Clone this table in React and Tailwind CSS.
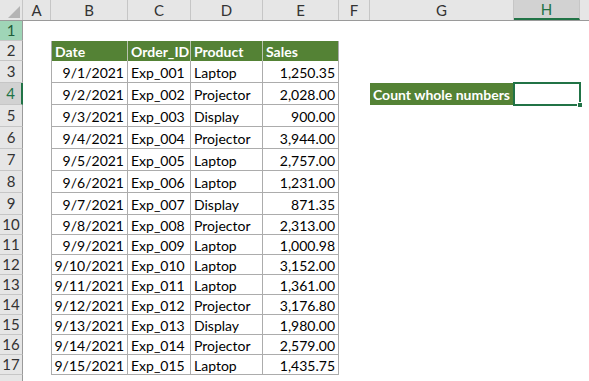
import React from 'react'

// column widths (px), A..H then the partial column at the right edge
const COLS = [
  { key: 'A', w: 'w-[28px]' },
  { key: 'B', w: 'w-[77px]' },
  { key: 'C', w: 'w-[63px]' },
  { key: 'D', w: 'w-[72px]' },
  { key: 'E', w: 'w-[76px]' },
  { key: 'F', w: 'w-[31px]' },
  { key: 'G', w: 'w-[144px]' },
  { key: 'H', w: 'w-[66px]' },
]

const DATA = [
  ['9/1/2021', 'Exp_001', 'Laptop', '1,250.35'],
  ['9/2/2021', 'Exp_002', 'Projector', '2,028.00'],
  ['9/3/2021', 'Exp_003', 'Display', '900.00'],
  ['9/4/2021', 'Exp_004', 'Projector', '3,944.00'],
  ['9/5/2021', 'Exp_005', 'Laptop', '2,757.00'],
  ['9/6/2021', 'Exp_006', 'Laptop', '1,231.00'],
  ['9/7/2021', 'Exp_007', 'Display', '871.35'],
  ['9/8/2021', 'Exp_008', 'Projector', '2,313.00'],
  ['9/9/2021', 'Exp_009', 'Laptop', '1,000.98'],
  ['9/10/2021', 'Exp_010', 'Laptop', '3,152.00'],
  ['9/11/2021', 'Exp_011', 'Laptop', '1,361.00'],
  ['9/12/2021', 'Exp_012', 'Projector', '3,176.80'],
  ['9/13/2021', 'Exp_013', 'Display', '1,980.00'],
  ['9/14/2021', 'Exp_014', 'Projector', '2,579.00'],
  ['9/15/2021', 'Exp_015', 'Laptop', '1,435.75'],
]

const font = { fontFamily: 'Lato, "Open Sans", sans-serif' }

// ─── Row header cell ─────────────────────────────────────────────────────────
function RowHead({ n, selected, tinted }) {
  const bg = selected
    ? 'bg-[#d2d2d2] text-[#217346] border-r-2 border-r-[#217346]'
    : tinted
    ? 'bg-[#9fd5b7] text-[#1e5c3a] border-r border-r-[#9a9a9a]'
    : 'bg-[#e6e6e6] text-[#333] border-r border-r-[#9a9a9a]'
  return (
    <div className={`w-[23px] shrink-0 h-full flex items-center justify-center text-[15px] border-b border-b-[#c6c6c6] ${bg}`}>
      {n}
    </div>
  )
}

function Cell({ w, className = '', children }) {
  return <div className={`${w} shrink-0 h-full flex items-center pt-[1px] ${className}`}>{children}</div>
}

export default function App() {
  const bodyCell = 'border-r border-b border-[#acacac] text-[14px] text-black'
  return (
    <div className="w-[589px] h-[381px] overflow-hidden bg-white select-none" style={font}>
      {/* column headers */}
      <div className="flex h-[21px] border-b border-[#9a9a9a] bg-[#e6e6e6]">
        <div className="w-[23px] shrink-0 h-full border-r border-[#c6c6c6] relative">
          <svg width="12" height="12" className="absolute right-[2px] bottom-[2px]">
            <polygon points="12,0 12,12 0,12" fill="#b4b4b4" />
          </svg>
        </div>
        {COLS.map(c => (
          <div
            key={c.key}
            className={`${c.w} shrink-0 h-full flex items-center justify-center text-[15px] border-r border-[#c6c6c6] ${
              c.key === 'H' ? 'bg-[#d2d2d2] text-[#217346] border-b-2 border-b-[#217346]' : 'text-[#333]'
            }`}
          >
            {c.key}
          </div>
        ))}
        <div className="flex-1" />
      </div>

      {/* row 1 */}
      <div className="flex h-[20px]">
        <RowHead n={1} tinted />
      </div>

      {/* row 2 - table header */}
      <div className="flex h-[20px]">
        <RowHead n={2} />
        <Cell w="w-[28px]" />
        <Cell w="w-[77px]" className="bg-[#548235] border-l border-[#acacac] border-r border-r-[#b9c3b0] px-[3px] text-white font-bold text-[14px]">Date</Cell>
        <Cell w="w-[63px]" className="bg-[#548235] border-r border-[#b9c3b0] px-[3px] text-white font-bold text-[14px]">Order_ID</Cell>
        <Cell w="w-[72px]" className="bg-[#548235] border-r border-[#b9c3b0] px-[3px] text-white font-bold text-[14px]">Product</Cell>
        <Cell w="w-[76px]" className="bg-[#548235] border-r border-[#acacac] px-[3px] text-white font-bold text-[14px]">Sales</Cell>
      </div>

      {/* rows 3..17 */}
      {DATA.map((r, i) => {
        const n = i + 3
        const h = n <= 9 ? 'h-[22px]' : 'h-[20px]'
        return (
          <div key={n} className={`flex ${h}`}>
            <RowHead n={n} selected={n === 4} />
            <Cell w="w-[28px]" />
            <Cell w="w-[77px]" className={`${bodyCell} border-l justify-end pr-[3px]`}>{r[0]}</Cell>
            <Cell w="w-[63px]" className={`${bodyCell} pl-[3px]`}>{r[1]}</Cell>
            <Cell w="w-[72px]" className={`${bodyCell} pl-[3px]`}>{r[2]}</Cell>
            <Cell w="w-[76px]" className={`${bodyCell} justify-end pr-[3px]`}>{r[3]}</Cell>
            {n === 4 && (
              <>
                <Cell w="w-[31px]" />
                <Cell w="w-[144px]" className="bg-[#548235] pl-[3px] text-white font-bold text-[14px] whitespace-nowrap">
                  Count whole numbers
                </Cell>
                <div className="w-[66px] shrink-0 h-full relative">
                  <div className="absolute -left-px -top-px -right-px -bottom-px border-2 border-[#217346]" />
                  <div className="absolute -right-[3px] -bottom-[3px] w-[6px] h-[6px] bg-[#217346] border border-white" />
                </div>
              </>
            )}
          </div>
        )
      })}

      {/* row 18 (only its top edge shows) */}
      <div className="flex h-[20px]">
        <div className="w-[23px] shrink-0 h-full bg-[#e6e6e6] border-r border-[#9a9a9a]" />
      </div>
    </div>
  )
}
